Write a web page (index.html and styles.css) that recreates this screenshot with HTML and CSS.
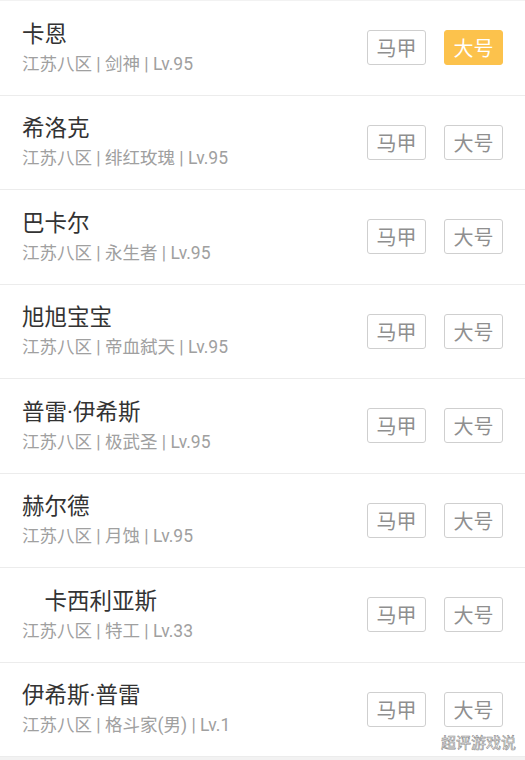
FILE: index.html
```html
<!DOCTYPE html>
<html lang="zh-CN">
<head>
    <meta charset="UTF-8">
    <meta name="viewport" content="width=device-width, initial-scale=1.0">
    <title>角色列表</title>
    <link rel="stylesheet" href="styles.css">
</head>
<body>

    <div class="role-list">
        <div class="role-row">
            <div class="role-info">
                <div class="role-name">卡恩</div>
                <div class="role-desc">江苏八区 | 剑神 | Lv.95</div>
            </div>
            <div class="role-btns">
                <span class="tag-btn">马甲</span>
                <span class="tag-btn active">大号</span>
            </div>
        </div>

        <div class="role-row">
            <div class="role-info">
                <div class="role-name">希洛克</div>
                <div class="role-desc">江苏八区 | 绯红玫瑰 | Lv.95</div>
            </div>
            <div class="role-btns">
                <span class="tag-btn">马甲</span>
                <span class="tag-btn">大号</span>
            </div>
        </div>

        <div class="role-row">
            <div class="role-info">
                <div class="role-name">巴卡尔</div>
                <div class="role-desc">江苏八区 | 永生者 | Lv.95</div>
            </div>
            <div class="role-btns">
                <span class="tag-btn">马甲</span>
                <span class="tag-btn">大号</span>
            </div>
        </div>

        <div class="role-row">
            <div class="role-info">
                <div class="role-name">旭旭宝宝</div>
                <div class="role-desc">江苏八区 | 帝血弑天 | Lv.95</div>
            </div>
            <div class="role-btns">
                <span class="tag-btn">马甲</span>
                <span class="tag-btn">大号</span>
            </div>
        </div>

        <div class="role-row">
            <div class="role-info">
                <div class="role-name">普雷·伊希斯</div>
                <div class="role-desc">江苏八区 | 极武圣 | Lv.95</div>
            </div>
            <div class="role-btns">
                <span class="tag-btn">马甲</span>
                <span class="tag-btn">大号</span>
            </div>
        </div>

        <div class="role-row">
            <div class="role-info">
                <div class="role-name">赫尔德</div>
                <div class="role-desc">江苏八区 | 月蚀 | Lv.95</div>
            </div>
            <div class="role-btns">
                <span class="tag-btn">马甲</span>
                <span class="tag-btn">大号</span>
            </div>
        </div>

        <div class="role-row">
            <div class="role-info">
                <div class="role-name">　卡西利亚斯</div>
                <div class="role-desc">江苏八区 | 特工 | Lv.33</div>
            </div>
            <div class="role-btns">
                <span class="tag-btn">马甲</span>
                <span class="tag-btn">大号</span>
            </div>
        </div>

        <div class="role-row">
            <div class="role-info">
                <div class="role-name">伊希斯·普雷</div>
                <div class="role-desc">江苏八区 | 格斗家(男) | Lv.1</div>
            </div>
            <div class="role-btns">
                <span class="tag-btn">马甲</span>
                <span class="tag-btn">大号</span>
            </div>
        </div>
    </div>

    <div class="list-foot"></div>

    <div class="watermark">超评游戏说</div>

</body>
</html>
```

FILE: styles.css
```css
body {
    margin: 0;
    padding: 0;
    background-color: #fff;
    font-family: "Roboto", "Noto Sans CJK SC", sans-serif;
    position: relative;
    min-height: 760px;
}

.role-list {
    border-top: 1px solid #f2f2f2;
}

.role-row {
    box-sizing: border-box;
    height: 94.5px;
    display: flex;
    align-items: center;
    justify-content: space-between;
    padding: 0 22px;
    border-bottom: 1px solid #ececec;
}

.role-name {
    font-size: 22.5px;
    line-height: 28px;
    color: #333;
    white-space: pre;
}

.role-desc {
    font-size: 17.5px;
    line-height: 24px;
    color: #a0a0a0;
    margin-top: 4px;
}

.role-btns {
    display: flex;
    gap: 18px;
}

.tag-btn {
    box-sizing: border-box;
    width: 59px;
    height: 35px;
    display: flex;
    align-items: center;
    justify-content: center;
    border: 1px solid #cfcfcf;
    border-radius: 3px;
    font-family: "Noto Sans CJK SC", sans-serif;
    font-size: 20px;
    color: #8f8f8f;
}

.tag-btn.active {
    background-color: #fcc24c;
    border-color: #fcc24c;
    color: #fff;
}

.list-foot {
    height: 10px;
    background-color: #f2f2f2;
}

.watermark {
    position: absolute;
    right: 9px;
    top: 731px;
    font-family: "Noto Sans CJK SC", sans-serif;
    font-size: 15px;
    color: #fff;
    -webkit-text-stroke: 0.6px #8c8c8c;
}
```
